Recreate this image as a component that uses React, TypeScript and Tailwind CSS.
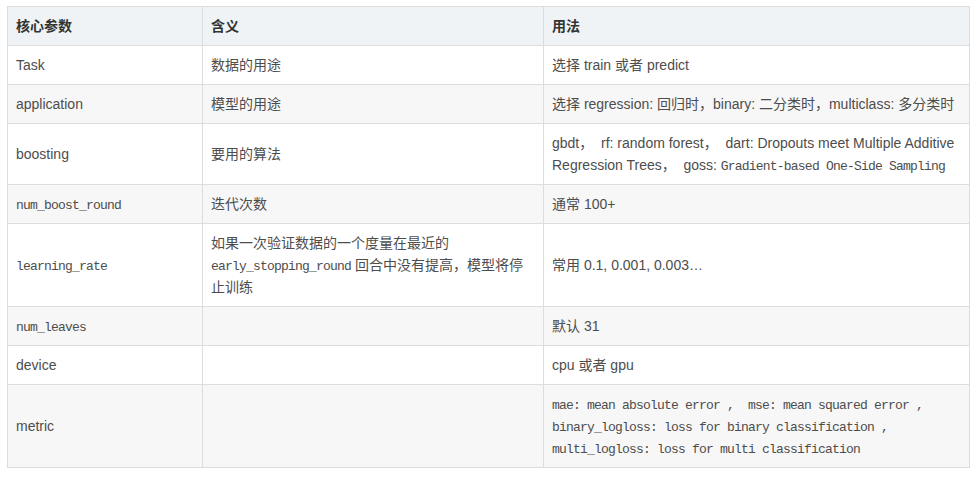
import type { ReactNode } from "react";

const sans = "font-['Liberation_Sans','Noto_Sans_CJK_SC',sans-serif]";
const mono =
  "font-['Liberation_Mono','Noto_Sans_CJK_SC',monospace] text-[13px] tracking-[-0.8px] leading-none";

function Code({ children }: { children: ReactNode }) {
  return <span className={mono}>{children}</span>;
}

interface Row {
  name: ReactNode;
  meaning: ReactNode;
  usage: ReactNode;
}

const rows: Row[] = [
  { name: "Task", meaning: "数据的用途", usage: "选择 train 或者 predict" },
  {
    name: "application",
    meaning: "模型的用途",
    usage: "选择 regression: 回归时，binary: 二分类时，multiclass: 多分类时",
  },
  {
    name: "boosting",
    meaning: "要用的算法",
    usage: (
      <>
        gbdt，&nbsp; rf: random forest，&nbsp; dart: Dropouts meet Multiple Additive Regression Trees，&nbsp;
        goss: <Code>Gradient-based One-Side Sampling</Code>
      </>
    ),
  },
  { name: <Code>num_boost_round</Code>, meaning: "迭代次数", usage: "通常 100+" },
  {
    name: <Code>learning_rate</Code>,
    meaning: (
      <>
        如果一次验证数据的一个度量在最近的 <Code>early_stopping_round</Code> 回合中没有提高，模型将停止训练
      </>
    ),
    usage: "常用 0.1, 0.001, 0.003…",
  },
  { name: <Code>num_leaves</Code>, meaning: "", usage: "默认 31" },
  { name: "device", meaning: "", usage: "cpu 或者 gpu" },
  {
    name: "metric",
    meaning: "",
    usage: (
      <Code>
        mae: mean absolute error ,&nbsp; mse: mean squared error , binary_logloss: loss for binary classification ,
        multi_logloss: loss for multi classification
      </Code>
    ),
  },
];

export default function App() {
  return (
    <div className={`min-h-screen bg-white pl-[7px] pt-[6px] ${sans}`}>
      <table className="w-[962px] table-fixed border-collapse text-[14px] leading-[22px] text-[#4d4d4d]">
        <colgroup>
          <col className="w-[195px]" />
          <col className="w-[341px]" />
          <col className="w-[426px]" />
        </colgroup>
        <thead>
          <tr className="bg-[#eff3f5]">
            <th className="border border-[#dddddd] px-2 py-2 text-left font-bold text-[#333]">核心参数</th>
            <th className="border border-[#dddddd] px-2 py-2 text-left font-bold text-[#333]">含义</th>
            <th className="border border-[#dddddd] px-2 py-2 text-left font-bold text-[#333]">用法</th>
          </tr>
        </thead>
        <tbody>
          {rows.map((row, i) => (
            <tr key={i} className={i % 2 === 1 ? "bg-[#f7f7f7]" : "bg-white"}>
              <td className="border border-[#dddddd] px-2 py-2 align-middle">{row.name}</td>
              <td className="border border-[#dddddd] px-2 py-2 align-middle">{row.meaning}</td>
              <td className="border border-[#dddddd] px-2 py-2 align-middle">{row.usage}</td>
            </tr>
          ))}
        </tbody>
      </table>
    </div>
  );
}
